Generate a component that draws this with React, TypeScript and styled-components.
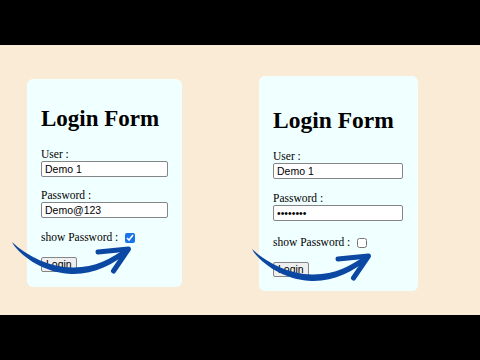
import styled, { createGlobalStyle, css } from "styled-components";

type Size = "sm" | "lg";

const GlobalStyle = createGlobalStyle`
  html, body {
    margin: 0;
    padding: 0;
    background: #000;
  }
  #root {
    width: 480px;
    height: 360px;
  }
`;

const Screen = styled.div`
  width: 480px;
  height: 360px;
  display: flex;
  flex-direction: column;
  overflow: hidden;
`;

const Letterbox = styled.div`
  height: 45px;
  background: #000;
  flex-shrink: 0;
`;

const Stage = styled.div`
  height: 270px;
  background: #faebd7;
  display: flex;
  align-items: flex-start;
  padding-left: 27px;
  gap: 77px;
`;

const Card = styled.form<{ $size: Size }>`
  position: relative;
  box-sizing: border-box;
  display: flex;
  flex-direction: column;
  align-items: flex-start;
  background: #f0ffff;
  border-radius: 6px;
  padding-left: 14px;
  font-family: "Liberation Serif", "Times New Roman", serif;
  color: #000;
  ${(p) =>
    p.$size === "sm"
      ? css`
          width: 155px;
          margin-top: 34px;
          padding-top: 27px;
          padding-bottom: 15px;
        `
      : css`
          width: 159px;
          margin-top: 31px;
          padding-top: 31px;
          padding-bottom: 14px;
        `}
`;

const Title = styled.h1<{ $size: Size }>`
  margin: 0;
  font-weight: bold;
  font-size: ${(p) => (p.$size === "sm" ? "23px" : "23.5px")};
  line-height: ${(p) => (p.$size === "sm" ? "26px" : "27px")};
  white-space: nowrap;
`;

const Label = styled.label<{ $gap: number }>`
  display: block;
  margin-top: ${(p) => p.$gap}px;
  font-size: 11.5px;
  line-height: 13px;
`;

const TextInput = styled.input<{ $size: Size }>`
  box-sizing: border-box;
  width: ${(p) => (p.$size === "sm" ? "127px" : "130px")};
  height: 16px;
  margin: 0;
  padding: 0 3px;
  border: 1px solid #858585;
  border-radius: 2px;
  background: #fff;
  font-family: "Liberation Sans", Arial, sans-serif;
  font-size: 10.5px;
  color: #000;
  outline: none;
`;

const ShowRow = styled.div<{ $gap: number }>`
  display: flex;
  align-items: center;
  margin-top: ${(p) => p.$gap}px;
  font-size: 11.5px;
  line-height: 13px;
  white-space: nowrap;
`;

const Check = styled.input`
  width: 10px;
  height: 10px;
  margin: 0 0 0 7px;
  accent-color: #1a73e8;
`;

const LoginButton = styled.button`
  box-sizing: border-box;
  margin-top: 13px;
  height: 15px;
  padding: 0 4px;
  border: 1px solid #858585;
  border-radius: 2px;
  background: #efefef;
  font-family: "Liberation Sans", Arial, sans-serif;
  font-size: 10.5px;
  line-height: 13px;
  color: #000;
`;

const ArrowSvg = styled.svg<{ $left: number; $top: number }>`
  position: absolute;
  left: ${(p) => p.$left}px;
  top: ${(p) => p.$top}px;
  overflow: visible;
  pointer-events: none;
`;

// hand-drawn style arrow: tapered body + chevron head
function Arrow({ left, top }: { left: number; top: number }) {
  return (
    <ArrowSvg $left={left} $top={top} width="124" height="40" viewBox="0 0 124 40">
      <path
        d="M2 4 C 18 19, 40 29, 62 29.5 C 84 30, 101 21, 117 9.5
           L 119.5 13 C 103 27, 84 36.5, 62 36 C 40 35.5, 17 24, 4 7.5 Z"
        fill="#0b48a3"
      />
      <path
        d="M88 14 L118.5 11 L103.5 33"
        fill="none"
        stroke="#0b48a3"
        strokeWidth="5"
        strokeLinecap="round"
        strokeLinejoin="round"
      />
    </ArrowSvg>
  );
}

function LoginCard({ size, shown }: { size: Size; shown: boolean }) {
  const lg = size === "lg";
  return (
    <Card $size={size} onSubmit={(e) => e.preventDefault()}>
      <Title $size={size}>Login Form</Title>
      <Label $gap={16}>User :</Label>
      <TextInput $size={size} type="text" defaultValue="Demo 1" />
      <Label $gap={lg ? 13 : 12}>Password :</Label>
      <TextInput $size={size} type={shown ? "text" : "password"} defaultValue="Demo@123" />
      <ShowRow $gap={lg ? 15 : 13}>
        show Password :
        <Check type="checkbox" defaultChecked={shown} />
      </ShowRow>
      <div>
        <LoginButton type="submit">Login</LoginButton>
      </div>
      <Arrow left={lg ? -9 : -17} top={lg ? 169 : 159} />
    </Card>
  );
}

export default function App() {
  return (
    <Screen>
      <GlobalStyle />
      <Letterbox />
      <Stage>
        <LoginCard size="sm" shown={true} />
        <LoginCard size="lg" shown={false} />
      </Stage>
      <Letterbox />
    </Screen>
  );
}
